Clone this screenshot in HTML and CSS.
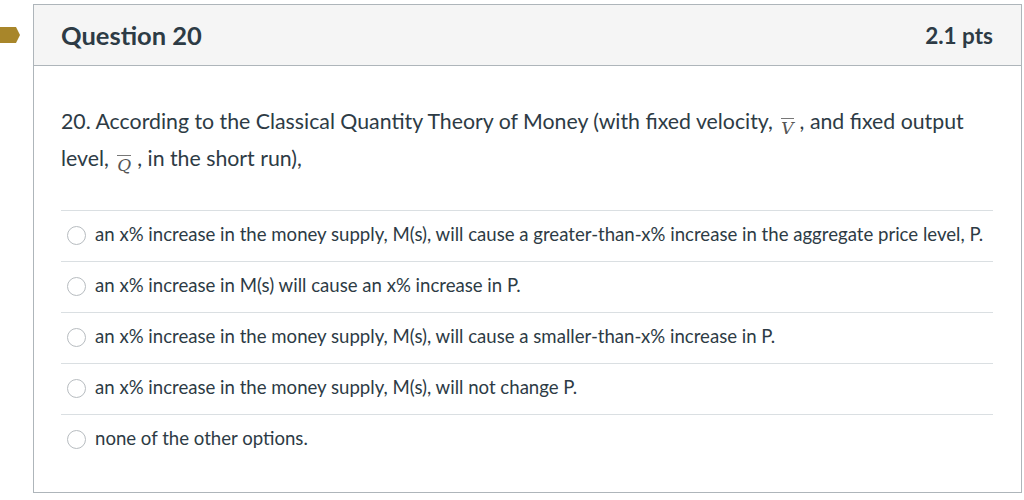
FILE: index.html
```html
<!DOCTYPE html>
<html>
<head>
<meta charset="utf-8">
<link rel="stylesheet" href="styles.css">
</head>
<body>
<div class="page">
  <div class="flag"></div>
  <div class="card">
    <div class="card-header">
      <h2 class="title">Question 20</h2>
      <div class="pts">2.1 pts</div>
    </div>
    <div class="card-body">
      <p class="question"><span>20. According to the Classical Quantity Theory of Money (with fixed velocity,</span> <span class="math">V</span><span>, and fixed output</span><br><span>level,</span> <span class="math">Q</span><span>, in the short run),</span></p>
      <div class="answers">
        <label class="answer"><span class="radio"></span><span>an x% increase in the money supply, M(s), will cause a greater-than-x% increase in the aggregate price level, P.</span></label>
        <label class="answer"><span class="radio"></span><span>an x% increase in M(s) will cause an x% increase in P.</span></label>
        <label class="answer"><span class="radio"></span><span>an x% increase in the money supply, M(s), will cause a smaller-than-x% increase in P.</span></label>
        <label class="answer"><span class="radio"></span><span>an x% increase in the money supply, M(s), will not change P.</span></label>
        <label class="answer"><span class="radio"></span><span>none of the other options.</span></label>
      </div>
    </div>
  </div>
</div>
</body>
</html>
```

FILE: styles.css
```css
* { box-sizing: border-box; }
html, body { margin: 0; padding: 0; background: #fff; }
body {
  font-family: Lato, "Open Sans", sans-serif;
  color: #2d3b45;
  width: 1024px;
  height: 500px;
  overflow: hidden;
}
.page {
  display: flex;
  align-items: flex-start;
  padding-top: 4px;
}
.flag {
  width: 20px;
  height: 16px;
  margin-top: 23px;
  margin-right: 13px;
  background: #a8862a;
  clip-path: polygon(0 0, 80% 0, 100% 50%, 80% 100%, 0 100%);
  flex: none;
}
.card {
  width: 989px;
  height: 489px;
  border: 1px solid #aeb5ba;
}
.card-header {
  height: 61px;
  background: #f5f5f5;
  border-bottom: 1px solid #aeb5ba;
  display: flex;
  align-items: center;
  justify-content: space-between;
  padding: 0 28px 0 27px;
}
.title {
  margin: 0;
  font-size: 25.5px;
  font-weight: 700;
  color: #2d3b45;
}
.pts {
  font-size: 22.5px;
  font-weight: 700;
  color: #2d3b45;
}
.card-body {
  padding: 37px 28px 0 27px;
}
.question {
  margin: 0;
  font-size: 21.3px;
  line-height: 37px;
}
.math {
  display: inline-block;
  font-family: "DejaVu Serif", "Liberation Serif", serif;
  font-style: italic;
  color: #555;
  font-size: 17px;
  line-height: 17px;
  border-top: 1.5px solid #777;
  padding-top: 1px;
  margin: 0 6px 0 3px;
  vertical-align: -5px;
}
.answers {
  margin-top: 33px;
}
.answer {
  display: flex;
  align-items: center;
  gap: 9px;
  height: 51px;
  border-top: 1px solid #dadfe2;
  padding: 0 0 4px 6px;
  font-size: 18.6px;
}
.radio {
  width: 19px;
  height: 19px;
  border-radius: 50%;
  border: 1px solid #b7bcc0;
  background: #fff;
  flex: none;
  margin-top: 3px;
}
```
